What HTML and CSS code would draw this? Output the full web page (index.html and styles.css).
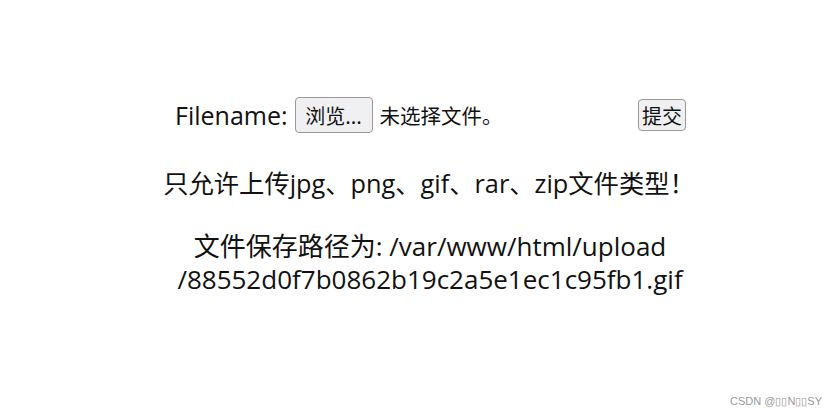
FILE: index.html
```html
<!DOCTYPE html>
<html>
<head>
<meta charset="utf-8">
<link rel="stylesheet" href="styles.css">
</head>
<body>
<div class="wrap">
  <form class="form">
    <span class="label">Filename:</span>
    <span class="btn browse">浏览...</span>
    <span class="nofile">未选择文件。</span>
    <span class="btn submit">提交</span>
  </form>
  <p class="msg">只允许上传jpg、png、gif、rar、zip文件类型！</p>
  <p class="path">文件保存路径为: /var/www/html/upload<br>/88552d0f7b0862b19c2a5e1ec1c95fb1.gif</p>
</div>
<div class="mark">CSDN @▯▯N▯▯SY</div>
</body>
</html>
```
FILE: styles.css
```css
html, body {
  margin: 0;
  padding: 0;
  background: #fff;
}
body {
  width: 836px;
  height: 416px;
  position: relative;
  font-family: "Open Sans", "Noto Sans CJK SC", sans-serif;
  color: #111;
}
.wrap {
  width: 524px;
  margin: 0 0 0 162px;
  padding-top: 96px;
  text-align: center;
}
.form {
  display: flex;
  align-items: center;
  margin: 0;
  padding-left: 13px;
  height: 38px;
}
.label {
  font-size: 25px;
  margin-right: 7px;
}
.btn {
  display: inline-flex;
  align-items: center;
  justify-content: center;
  border: 1px solid #999;
  border-radius: 4px;
  background: #f0f0f2;
  font-family: "Noto Sans CJK SC", sans-serif;
  font-size: 20px;
  box-sizing: border-box;
}
.browse {
  width: 78px;
  height: 36px;
}
.nofile {
  font-family: "Noto Sans CJK SC", sans-serif;
  font-size: 20.5px;
  margin-left: 7px;
}
.submit {
  margin-left: auto;
  width: 48px;
  height: 32px;
  font-size: 20px;
}
.msg {
  margin: 32px -10px 0;
  padding-left: 10px;
  font-size: 25.3px;
  line-height: 34px;
  white-space: nowrap;
}
.path {
  margin: 30px -10px 0;
  padding-left: 12px;
  font-size: 26px;
  line-height: 33px;
}
.mark {
  position: absolute;
  right: 14px;
  bottom: 8px;
  font-family: "Liberation Sans", sans-serif;
  font-size: 11px;
  color: #999;
}
```
